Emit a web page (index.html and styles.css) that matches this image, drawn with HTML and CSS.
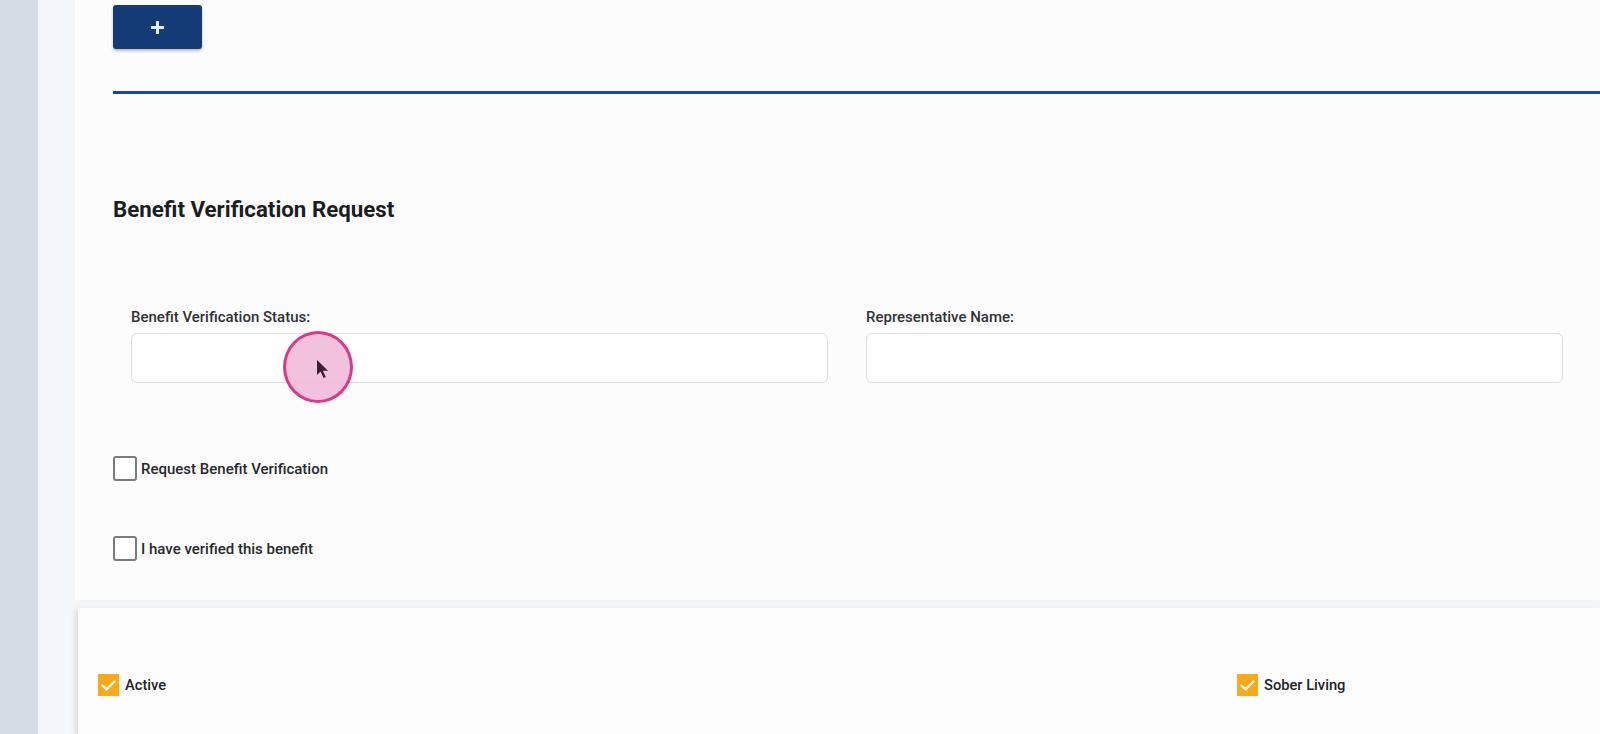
FILE: index.html
```html
<!DOCTYPE html>
<html lang="en">
<head>
  <meta charset="UTF-8">
  <title>Benefit Verification</title>
  <meta name="viewport" content="width=device-width, initial-scale=1.0">
  <link rel="stylesheet" href="styles.css">
</head>
<body>
  <div class="app">
    <aside class="rail"></aside>
    <main class="page">
      <section class="panel">
        <div class="toolbar">
          <button class="add-btn" type="button" aria-label="Add">
            <svg width="13" height="13" viewBox="0 0 13 13">
              <path d="M6.5 1v11M1 6.5h11" stroke="#e8edf5" stroke-width="3" stroke-linecap="round"/>
            </svg>
          </button>
        </div>
        <div class="divider"></div>
        <h2 class="title">Benefit Verification Request</h2>
        <div class="fields">
          <div class="field">
            <label class="field-label">Benefit Verification Status:</label>
            <input class="field-input" type="text">
          </div>
          <div class="field">
            <label class="field-label">Representative Name:</label>
            <input class="field-input" type="text">
          </div>
        </div>
        <label class="check">
          <span class="box"></span>
          <span>Request Benefit Verification</span>
        </label>
        <label class="check check-last">
          <span class="box"></span>
          <span>I have verified this benefit</span>
        </label>
      </section>
      <section class="card">
        <div class="card-row">
          <label class="flag">
            <span class="flag-box">
              <svg width="21" height="21" viewBox="0 0 21 21"><path d="M4.5 10.5l4 3.8L16.5 6.5" fill="none" stroke="#fff" stroke-width="2.4" stroke-linecap="round" stroke-linejoin="round"/></svg>
            </span>
            <span>Active</span>
          </label>
          <label class="flag">
            <span class="flag-box">
              <svg width="21" height="21" viewBox="0 0 21 21"><path d="M4.5 10.5l4 3.8L16.5 6.5" fill="none" stroke="#fff" stroke-width="2.4" stroke-linecap="round" stroke-linejoin="round"/></svg>
            </span>
            <span>Sober Living</span>
          </label>
        </div>
      </section>
    </main>
    <div class="click-spot">
      <svg class="pointer" width="13" height="20" viewBox="0 0 13 20">
        <path d="M1 1v15l3.6-3.4 3 6.4 2.2-1-3-6.3H12z" fill="#3b1f30"/>
      </svg>
    </div>
  </div>
</body>
</html>
```

FILE: styles.css
```css
html, body {
  margin: 0;
  padding: 0;
  height: 100%;
  overflow: hidden;
  background: #f3f6fb;
  font-family: Roboto, "Liberation Sans", sans-serif;
  color: #222328;
}
.app {
  display: flex;
  height: 100%;
  position: relative;
}
.rail {
  width: 38px;
  flex-shrink: 0;
  background: #d6dce6;
}
.page {
  flex-grow: 1;
  margin-left: 37px;
  display: flex;
  flex-direction: column;
  gap: 8px;
  background: #f3f5f9;
  min-width: 0;
}
.panel {
  background: #fcfcfd;
  padding: 5px 0 39px 38px;
}
.toolbar {
  display: flex;
}
.add-btn {
  width: 89px;
  height: 44px;
  border: none;
  border-radius: 3px;
  background: #143b75;
  box-shadow: 0 2px 3px rgba(0, 0, 0, 0.25);
  display: flex;
  align-items: center;
  justify-content: center;
  padding: 0;
}
.divider {
  height: 3px;
  background: #1f4b8b;
  margin-top: 42px;
}
.title {
  margin: 103px 0 0;
  font-size: 22.3px;
  font-weight: 700;
  line-height: 24px;
  color: #1c1d22;
}
.fields {
  display: grid;
  grid-template-columns: 1fr 1fr;
  gap: 38px;
  margin: 87px 37px 0 18px;
}
.field {
  display: flex;
  flex-direction: column;
}
.field-label {
  font-size: 15px;
  font-weight: 500;
  line-height: 18px;
  color: #303136;
  margin-bottom: 7px;
}
.field-input {
  height: 50px;
  box-sizing: border-box;
  border: 1px solid #dcdde0;
  border-radius: 6px;
  background: #fefefe;
}
.check {
  display: flex;
  align-items: center;
  gap: 4px;
  font-size: 15px;
  font-weight: 500;
  color: #27282c;
  margin-top: 73px;
}
.check-last {
  margin-top: 55px;
}
.box {
  width: 24px;
  height: 25px;
  box-sizing: border-box;
  border: 2px solid #7a7b7e;
  border-radius: 3px;
  background: #fff;
}
.card {
  flex-grow: 1;
  margin-left: 3px;
  background: #fdfdfe;
  box-shadow: -3px 2px 5px rgba(0, 0, 0, 0.1);
  padding: 66px 20px 0;
}
.card-row {
  display: grid;
  grid-template-columns: 1fr 343px;
}
.flag {
  display: flex;
  align-items: center;
  gap: 6px;
  font-size: 14.7px;
  font-weight: 500;
  color: #222328;
}
.flag-box {
  width: 21px;
  height: 22px;
  background: #fba919;
  display: flex;
  align-items: center;
  justify-content: center;
}
.click-spot {
  position: absolute;
  left: 283px;
  top: 331px;
  width: 70px;
  height: 72px;
  box-sizing: border-box;
  border: 3px solid #d83a8b;
  border-radius: 50%;
  background: rgba(240, 184, 216, 0.88);
}
.pointer {
  position: absolute;
  left: 30px;
  top: 25px;
  filter: blur(0.4px);
}
```
